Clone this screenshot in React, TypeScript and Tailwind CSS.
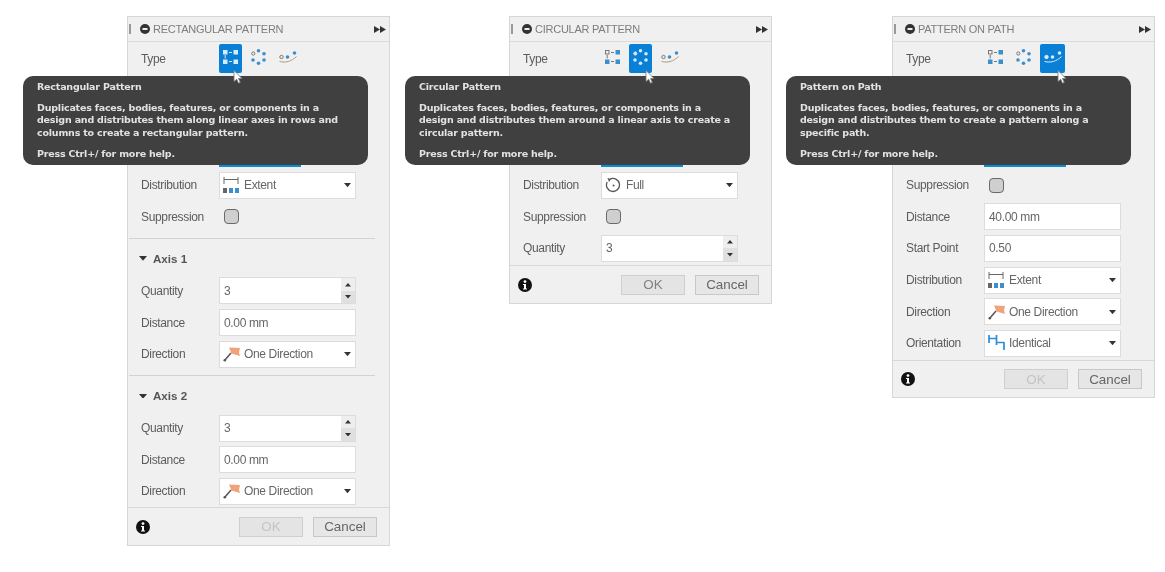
import React from "react";

type PatternType = "rect" | "circle" | "path";

const RectIcon = ({ active }: { active: boolean }) => {
  const main = active ? "#d5ecfb" : "#3d8fcc";
  const line = active ? "#d5ecfb" : "#777";
  return (
    <svg width="15" height="14" viewBox="0 0 15 14">
      <rect x="0.500" y="0.500" width="3.500" height="3.500" fill={active ? main : "none"} stroke={active ? main : "#777"} />
      <rect x="10.500" y="0" width="4.500" height="4.500" fill={main} />
      <rect x="0" y="9.500" width="4.500" height="4.500" fill={main} />
      <rect x="10.500" y="9.500" width="4.500" height="4.500" fill={main} />
      <path d="M6 2.500h3M6 11.500h3M2.200 5v3.500" stroke={line} strokeWidth="1" />
    </svg>
  );
};

const CircleIcon = ({ active }: { active: boolean }) => {
  const main = active ? "#cfe9fa" : "#3d8fcc";
  return (
    <svg width="15" height="16" viewBox="0 0 15 16">
      <circle cx="2.300" cy="4.500" r="1.600" fill={active ? main : "none"} stroke={active ? main : "#777"} />
      <circle cx="7.500" cy="1.800" r="1.800" fill={main} />
      <circle cx="13" cy="4.800" r="1.800" fill={main} />
      <circle cx="13" cy="11" r="1.800" fill={main} />
      <circle cx="7.500" cy="14.200" r="1.800" fill={main} />
      <circle cx="2" cy="11" r="1.800" fill={main} />
    </svg>
  );
};

const PathIcon = ({ active }: { active: boolean }) => {
  const main = active ? "#d5ecfb" : "#3d8fcc";
  return (
    <svg width="18" height="13" viewBox="0 0 18 13">
      <circle cx="2.500" cy="6" r="1.700" fill={active ? main : "none"} stroke={active ? main : "#777"} />
      <circle cx="8.500" cy="6" r="1.800" fill={main} />
      <circle cx="15.500" cy="2" r="1.800" fill={main} />
      <path d="M0.500 10.500c6 1.500 12 0 17-5" fill="none" stroke={active ? main : "#b59a78"} strokeWidth="1" />
    </svg>
  );
};

const ExtentIcon = () => (
  <svg width="16" height="16" viewBox="0 0 16 16">
    <path d="M1 0v7M15 0v7M1 2.500h14" stroke="#666" strokeWidth="1" fill="none" />
    <rect x="0" y="11" width="4" height="5" fill="#666" />
    <rect x="6" y="11" width="4" height="5" fill="#3d8fcc" />
    <rect x="12" y="11" width="4" height="5" fill="#3d8fcc" />
  </svg>
);

const FullIcon = () => (
  <svg width="16" height="16" viewBox="0 0 16 16">
    <path d="M5 2.200A6.500 6.500 0 1 1 2.200 5" fill="none" stroke="#555" strokeWidth="1.300" />
    <path d="M2.500 1l3.500 1-2 3z" fill="#555" />
    <circle cx="8.500" cy="8.500" r="1" fill="#555" />
  </svg>
);

const DirectionIcon = () => (
  <svg width="17" height="16" viewBox="0 0 17 16">
    <path d="M6 1.500l11 .5-1 4.500 1 3.500-8.500-2.500z" fill="#f0a27a" />
    <path d="M1.500 14.500L8 7" stroke="#555" strokeWidth="1.500" />
    <circle cx="1.800" cy="14.300" r="1.300" fill="#555" />
  </svg>
);

const IdenticalIcon = () => (
  <svg width="17" height="16" viewBox="0 0 17 16">
    <path d="M1 0v8M8.500 0v10M16 7v8M1 3.500h7.500M8.500 7.500H16" stroke="#2a8fd8" strokeWidth="1.700" fill="none" />
  </svg>
);

const Caret = ({ up, size = 7 }: { up?: boolean; size?: number }) => (
  <svg width={size} height={size * 0.6} viewBox="0 0 10 6">
    <path d={up ? "M0 6L5 0l5 6z" : "M0 0l5 6 5-6z"} fill="#333" />
  </svg>
);

const Row = ({ label, children }: { label: string; children: React.ReactNode }) => (
  <div className="flex h-[31.6px] items-center pl-[13px]">
    <div className="w-[78px] text-[12px] tracking-[-0.35px] text-[#5c5c5c]">{label}</div>
    {children}
  </div>
);

const TextField = ({ value }: { value: string }) => (
  <div className="flex h-[27px] w-[137px] items-center border border-[#dcdcdc] bg-white pl-[4px] text-[12px] tracking-[-0.35px] text-[#666]">
    {value}
  </div>
);

const QuantityField = () => (
  <div className="flex h-[27px] w-[137px] items-center border border-[#dcdcdc] bg-white pl-[4px] text-[12px] text-[#666]">
    <span className="flex-1">3</span>
    <div className="flex h-full w-[14px] flex-col">
      <div className="flex flex-1 items-center justify-center bg-[#eeeeee]">
        <Caret up size={6} />
      </div>
      <div className="flex flex-1 items-center justify-center bg-[#e0e0e0]">
        <Caret size={6} />
      </div>
    </div>
  </div>
);

const SelectField = ({ icon, value }: { icon: React.ReactNode; value: string }) => (
  <div className="flex h-[27px] w-[137px] items-center border border-[#dcdcdc] bg-white pl-[3px] pr-[4px] text-[12px] tracking-[-0.35px] text-[#666]">
    <div className="flex w-[21px] shrink-0 items-center">{icon}</div>
    <span className="flex-1">{value}</span>
    <Caret />
  </div>
);

const Suppression = () => (
  <Row label="Suppression">
    <div className="ml-[5px] h-[15px] w-[15px] rounded-[4px] border-[1.500px] border-[#6a6a6a] bg-[#cfcfcf]" />
  </Row>
);

const Section = ({ title }: { title: string }) => (
  <>
    <div className="mr-[14px] mt-[5.500px] ml-[1px] h-px bg-[#d2d2d2]" />
    <div className="flex h-[36px] items-center gap-[6px] pl-[11px] pt-[3px] text-[11.6px] font-bold text-[#555]">
      <Caret size={8} />
      {title}
    </div>
  </>
);

const Axis = ({ title }: { title: string }) => (
  <>
    <Section title={title} />
    <Row label="Quantity">
      <QuantityField />
    </Row>
    <Row label="Distance">
      <TextField value="0.00 mm" />
    </Row>
    <Row label="Direction">
      <SelectField icon={<DirectionIcon />} value="One Direction" />
    </Row>
  </>
);

const Footer = ({ okDim }: { okDim: boolean }) => (
  <div className="flex h-[37.500px] items-center border-t border-[#d8d8d8] pl-[8px] pr-[12px]">
    <svg width="14" height="14" viewBox="0 0 14 14">
      <circle cx="7" cy="7" r="7" fill="#111" />
      <circle cx="7" cy="3.600" r="1.400" fill="#fff" />
      <path d="M5 6h3v4.500h1v1H5v-1h1V7H5z" fill="#fff" />
    </svg>
    <div className="ml-auto flex gap-[10px]">
      <div
        className={`flex h-[20px] w-[64px] items-center justify-center border border-[#cfcfcf] bg-[#e4e4e4] pt-[2px] text-[13.4px] ${
          okDim ? "text-[#c4c4c4]" : "text-[#808080]"
        }`}
      >
        OK
      </div>
      <div className="flex h-[20px] w-[64px] items-center justify-center border border-[#c8c8c8] bg-[#e6e6e6] pt-[2px] text-[13.4px] text-[#666]">
        Cancel
      </div>
    </div>
  </div>
);

const Tooltip = ({ title, lines, left }: { title: string; lines: string[]; left: string }) => (
  <div
    className={`absolute top-[59px] z-10 h-[89px] w-[345px] rounded-[10px] bg-[#404040] pl-[14px] pt-[5px] font-['DejaVu_Sans',sans-serif] text-[9.500px] leading-[12.700px] font-bold tracking-[-0.2px] text-[#e2e2e2] ${left}`}
  >
    <div>{title}</div>
    <div className="mt-[8px]">
      {lines.map((line) => (
        <div key={line}>{line}</div>
      ))}
    </div>
    <div className="mt-[8px]">Press Ctrl+/ for more help.</div>
  </div>
);

const Cursor = ({ left }: { left: string }) => (
  <svg className={`absolute top-[53px] z-20 ${left}`} width="10" height="14" viewBox="0 0 10 14">
    <path d="M1 0.500v11l2.700-2.300 1.800 4 1.800-.8-1.800-3.900H9z" fill="#fff" stroke="#777" strokeWidth="0.800" />
  </svg>
);

const Panel = ({
  title,
  active,
  children,
}: {
  title: string;
  active: PatternType;
  children: React.ReactNode;
}) => {
  const tiles: { key: PatternType; width: string; node: React.ReactNode }[] = [
    { key: "rect", width: "w-[23px]", node: <RectIcon active={active === "rect"} /> },
    { key: "circle", width: "w-[23px]", node: <CircleIcon active={active === "circle"} /> },
    { key: "path", width: "w-[25px]", node: <PathIcon active={active === "path"} /> },
  ];
  return (
    <div className="relative w-[263px] border border-[#d6d6d6] bg-[#f0f0f0]">
      <div className="flex h-[25px] items-center border-b border-[#dcdcdc] pl-[1px] pr-[3px]">
        <div className="h-[10px] w-[2px] bg-[#999]" />
        <svg className="ml-[9px]" width="10" height="10" viewBox="0 0 10 10">
          <circle cx="5" cy="5" r="5" fill="#333" />
          <path d="M2.500 4h5v2h-5z" fill="#eee" />
        </svg>
        <span className="ml-[3px] flex-1 text-[11px] tracking-[-0.25px] text-[#7d7d7d]">{title}</span>
        <svg width="12" height="7" viewBox="0 0 12 7">
          <path d="M0 0l6 3.500L0 7zM6 0l6 3.500L6 7z" fill="#333" />
        </svg>
      </div>
      <div className="mt-[1.500px] flex h-[29px] items-center">
        <div className="w-[91px] pl-[13px] pt-[2px] text-[12px] tracking-[-0.35px] text-[#5c5c5c]">Type</div>
        <div className="flex gap-[5px]">
          {tiles.map((tile) => (
            <div
              key={tile.key}
              className={`flex h-[29px] items-center justify-center rounded-[2px] pb-[2px] ${tile.width} ${
                tile.key === active ? "bg-[#0a7fd6]" : ""
              }`}
            >
              {tile.node}
            </div>
          ))}
        </div>
      </div>
      <div className="ml-[91px] mt-[70px] h-[24px] w-[82px] bg-[#0a8bd6]" />
      <div className="mt-[3px]">{children}</div>
    </div>
  );
};

export default function App() {
  return (
    <div className="flex min-h-[572px] items-start gap-[119px] bg-white pl-[127px] pt-[16px] font-['Liberation_Sans',Arial,sans-serif] blur-[0.4px]">
      <Panel title="RECTANGULAR PATTERN" active="rect">
        <Tooltip
          left="left-[-105px]"
          title="Rectangular Pattern"
          lines={[
            "Duplicates faces, bodies, features, or components in a",
            "design and distributes them along linear axes in rows and",
            "columns to create a rectangular pattern.",
          ]}
        />
        <Cursor left="left-[105px]" />
        <Row label="Distribution">
          <SelectField icon={<ExtentIcon />} value="Extent" />
        </Row>
        <Suppression />
        <Axis title="Axis 1" />
        <Axis title="Axis 2" />
        <Footer okDim />
      </Panel>

      <Panel title="CIRCULAR PATTERN" active="circle">
        <Tooltip
          left="left-[-105px]"
          title="Circular Pattern"
          lines={[
            "Duplicates faces, bodies, features, or components in a",
            "design and distributes them around a linear axis to create a",
            "circular pattern.",
          ]}
        />
        <Cursor left="left-[135px]" />
        <Row label="Distribution">
          <SelectField icon={<FullIcon />} value="Full" />
        </Row>
        <Suppression />
        <Row label="Quantity">
          <QuantityField />
        </Row>
        <div className="h-px" />
        <Footer okDim={false} />
      </Panel>

      <div className="ml-px">
        <Panel title="PATTERN ON PATH" active="path">
          <Tooltip
            left="left-[-107px]"
            title="Pattern on Path"
            lines={[
              "Duplicates faces, bodies, features, or components in a",
              "design and distributes them to create a pattern along a",
              "specific path.",
            ]}
          />
          <Cursor left="left-[164px]" />
          <Suppression />
          <Row label="Distance">
            <TextField value="40.00 mm" />
          </Row>
          <Row label="Start Point">
            <TextField value="0.50" />
          </Row>
          <Row label="Distribution">
            <SelectField icon={<ExtentIcon />} value="Extent" />
          </Row>
          <Row label="Direction">
            <SelectField icon={<DirectionIcon />} value="One Direction" />
          </Row>
          <Row label="Orientation">
            <SelectField icon={<IdenticalIcon />} value="Identical" />
          </Row>
          <div className="h-[0.5px]" />
          <Footer okDim />
        </Panel>
      </div>
    </div>
  );
}
